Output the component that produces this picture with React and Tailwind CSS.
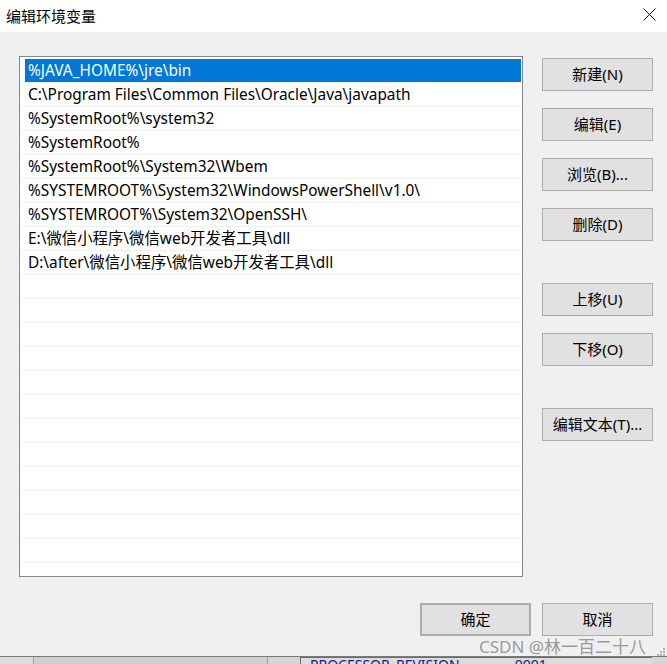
import React from 'react';

const FONT = '"Noto Sans", "Noto Sans CJK SC", sans-serif';

const paths = [
  '%JAVA_HOME%\\jre\\bin',
  'C:\\Program Files\\Common Files\\Oracle\\Java\\javapath',
  '%SystemRoot%\\system32',
  '%SystemRoot%',
  '%SystemRoot%\\System32\\Wbem',
  '%SYSTEMROOT%\\System32\\WindowsPowerShell\\v1.0\\',
  '%SYSTEMROOT%\\System32\\OpenSSH\\',
  'E:\\微信小程序\\微信web开发者工具\\dll',
  'D:\\after\\微信小程序\\微信web开发者工具\\dll',
];

function Btn({ children, className = '' }) {
  return (
    <button
      className={`h-[33px] w-[111px] border border-[#adadad] bg-[#e1e1e1] text-[15px] text-black flex items-center justify-center ${className}`}
    >
      {children}
    </button>
  );
}

export default function App() {
  const rows = Array.from({ length: 22 }, (_, i) => paths[i] ?? '');

  return (
    <div className="relative w-[667px] h-[664px] overflow-hidden bg-[#f0f0f0]" style={{ fontFamily: FONT }}>
      {/* title bar */}
      <div className="h-[32px] bg-white flex items-center justify-between pl-[6px] pr-[11px]">
        <span className="text-[15px] text-black leading-none">编辑环境变量</span>
        <svg width="13" height="13" viewBox="0 0 13 13" className="mt-[-4px]">
          <path d="M0.5 0.5 L12.5 12.5 M12.5 0.5 L0.5 12.5" stroke="#111" strokeWidth="1" />
        </svg>
      </div>

      {/* body */}
      <div className="h-[624px] bg-[#f0f0f0] pt-[24px] pl-[19px]">
        <div className="flex">
          <div className="w-[504px] h-[521px] border border-[#828790] bg-white overflow-hidden pt-[2px]">
            {rows.map((p, i) => (
              <div key={i} className="mx-[1px] h-[24px] border-b border-[#f0f0f0] flex">
                {i === 0 ? (
                  <div className="ml-[4px] flex-1 bg-[#0078d7] text-white text-[15.4px] pl-[3px] flex items-center whitespace-nowrap">
                    {p}
                  </div>
                ) : (
                  <div className="flex-1 text-black text-[15.4px] pl-[7px] flex items-center whitespace-nowrap">{p}</div>
                )}
              </div>
            ))}
          </div>

          <div className="ml-[19px] mt-[2px] flex flex-col">
            <Btn>新建(N)</Btn>
            <Btn className="mt-[17px]">编辑(E)</Btn>
            <Btn className="mt-[17px]">浏览(B)...</Btn>
            <Btn className="mt-[17px]">删除(D)</Btn>
            <Btn className="mt-[42px]">上移(U)</Btn>
            <Btn className="mt-[17px]">下移(O)</Btn>
            <Btn className="mt-[42px]">编辑文本(T)...</Btn>
          </div>
        </div>

        <div className="mt-[26px] flex justify-end gap-[11px] pr-[14px]">
          <Btn className="border-2 border-[#0078d7]">确定</Btn>
          <Btn>取消</Btn>
        </div>
      </div>

      {/* window behind, peeking out under the dialog */}
      <div className="h-[8px] border-t border-[#7a7a7a] bg-[#d6d6d6] flex">
        <div className="w-[34px] border-r border-[#a0a0a0] bg-[#dcdcdc]" />
        <div className="w-[234px] border-r border-[#a0a0a0] bg-[#cfcfcf]" />
        <div className="w-[32px]" />
        <div className="w-[352px] border-l border-t border-[#6b6b6b] bg-[#dcdcdc] overflow-hidden flex">
          <span className="pl-[9px] text-[14px] leading-[14px] text-[#1a1a80] whitespace-nowrap">PROCESSOR_REVISION</span>
          <span className="pl-[55px] text-[14px] leading-[14px] text-[#1a1a80]">0001</span>
        </div>
      </div>

      {/* watermark */}
      <div className="absolute left-[479px] top-[634px] text-[17px] text-[#9a9a9a] whitespace-nowrap">
        CSDN @林一百二十八
      </div>
      <div className="absolute left-[657px] top-[648px] grid grid-cols-3 gap-[1px]">
        <span className="w-[2px] h-[2px]" />
        <span className="w-[2px] h-[2px]" />
        <span className="w-[2px] h-[2px] bg-[#b0b0b0]" />
        <span className="w-[2px] h-[2px]" />
        <span className="w-[2px] h-[2px] bg-[#b0b0b0]" />
        <span className="w-[2px] h-[2px] bg-[#b0b0b0]" />
        <span className="w-[2px] h-[2px] bg-[#b0b0b0]" />
        <span className="w-[2px] h-[2px] bg-[#b0b0b0]" />
        <span className="w-[2px] h-[2px] bg-[#b0b0b0]" />
      </div>
    </div>
  );
}
